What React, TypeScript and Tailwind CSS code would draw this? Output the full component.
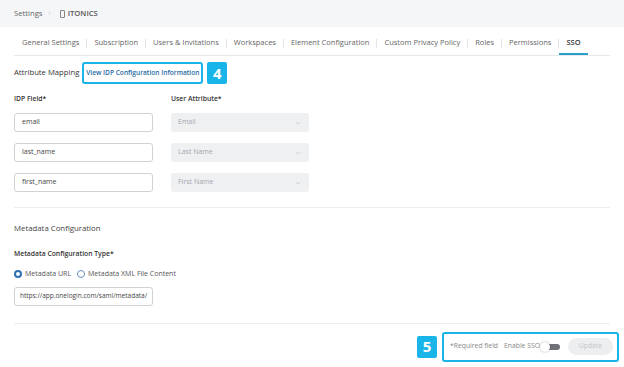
import { ChevronDown } from 'lucide-react'

const tabs = [
  'General Settings',
  'Subscription',
  'Users & Invitations',
  'Workspaces',
  'Element Configuration',
  'Custom Privacy Policy',
  'Roles',
  'Permissions',
  'SSO',
]

const rows = [
  { field: 'email', attr: 'Email' },
  { field: 'last_name', attr: 'Last Name' },
  { field: 'first_name', attr: 'First Name' },
]

function Badge({ n }: { n: string }) {
  return (
    <div className="shrink-0 w-[20px] h-[22px] bg-[#19b4e8] rounded-[2px] flex items-center justify-center text-white text-[15px] font-bold leading-none">
      {n}
    </div>
  )
}

export default function App() {
  return (
    <div
      className="w-[624px] h-[367px] bg-white overflow-hidden text-[#444] whitespace-nowrap"
      style={{ fontFamily: '"Open Sans", sans-serif' }}
    >
      {/* Breadcrumb */}
      <div className="h-[27px] bg-[#f5f6f8] flex items-center px-[14px] text-[7.7px] text-[#666]">
        <span>Settings</span>
        <span className="ml-[6px] mr-[9px] text-[#bbb] text-[7px]">›</span>
        <span className="w-[5px] h-[8px] border border-[#888] rounded-[1px] mr-[3px]" />
        <span className="font-semibold text-[#555]">ITONICS</span>
      </div>

      {/* Tabs */}
      <div className="mx-[14px] h-[29px] border-b border-[#e6e8eb] flex items-stretch pl-[1px]">
        {tabs.map((t, i) => (
          <div key={t} className="flex items-center shrink-0 pt-[4px]">
            {i > 0 && <div className="w-px h-[9px] bg-[#e2e4e7]" />}
            <div
              className={`h-full flex items-center px-[7px] text-[7.5px] ${
                t === 'SSO'
                  ? 'text-[#333] font-semibold border-b-2 border-[#2a9fc9] pt-[2px]'
                  : 'text-[#666]'
              }`}
            >
              {t}
            </div>
          </div>
        ))}
      </div>

      <div className="px-[14px]">
        {/* Attribute mapping */}
        <div className="flex items-center mt-[6px] h-[22px]">
          <span className="text-[7.7px] text-[#333]">Attribute Mapping</span>
          <div className="ml-[3px] shrink-0 h-[22px] w-[121px] border-2 border-[#19b4e8] rounded-[3px] flex items-center justify-center">
            <span className="text-[6.6px] font-semibold text-[#1f6aa8]">View IDP Configuration Information</span>
          </div>
          <div className="ml-[4px]">
            <Badge n="4" />
          </div>
        </div>

        <div className="flex mt-[10px] text-[6.8px] font-semibold text-[#333]">
          <span className="w-[157px]">IDP Field*</span>
          <span>User Attribute*</span>
        </div>

        <div className="flex flex-col gap-[11px] mt-[9px]">
          {rows.map((r) => (
            <div key={r.field} className="flex">
              <div className="w-[139px] h-[19px] border border-[#cfd2d6] rounded-[3px] flex items-center px-[7px] text-[7px] text-[#444]">
                {r.field}
              </div>
              <div className="ml-[18px] w-[138px] h-[19px] bg-[#eff0f2] rounded-[3px] flex items-center justify-between px-[7px] text-[7px] text-[#a3a7ad]">
                <span>{r.attr}</span>
                <ChevronDown size={8} strokeWidth={1.5} className="text-[#b5b9be]" />
              </div>
            </div>
          ))}
        </div>

        <div className="mt-[15px] w-[596px] border-t border-[#eceef0]" />

        {/* Metadata */}
        <div className="mt-[15px] text-[7.8px] text-[#444]">Metadata Configuration</div>
        <div className="mt-[14px] text-[6.8px] font-semibold text-[#333]">Metadata Configuration Type*</div>

        <div className="flex items-center mt-[10px] text-[7px] text-[#555]">
          <span className="w-[8px] h-[8px] rounded-full border-[2.5px] border-[#2c6fb5] bg-white" />
          <span className="ml-[3px]">Metadata URL</span>
          <span className="ml-[6px] w-[8px] h-[8px] rounded-full border border-[#6b8fc0] bg-white" />
          <span className="ml-[3px]">Metadata XML File Content</span>
        </div>

        <div className="mt-[7px] w-[139px] h-[19px] border border-[#cfd2d6] rounded-[3px] flex items-center px-[5px] text-[6.5px] text-[#444] overflow-hidden">
          https://app.onelogin.com/saml/metadata/
        </div>

        <div className="mt-[17px] w-[596px] border-t border-[#eceef0]" />

        {/* Footer */}
        <div className="flex justify-end items-center mt-[8px] w-[605px]">
          <Badge n="5" />
          <div className="ml-[5px] shrink-0 w-[177px] h-[30px] border-2 border-[#19b4e8] rounded-[3px] flex items-center pl-[6px] text-[6.8px] text-[#888]">
            <span>*Required field</span>
            <span className="ml-[6px]">Enable SSO</span>
            <div className="relative shrink-0 w-[20px] h-[10px]">
              <div className="absolute left-[4px] top-[2px] w-[16px] h-[6px] rounded-full bg-[#6f7378]" />
              <div className="absolute left-0 top-0 w-[10px] h-[10px] rounded-full bg-white shadow-[0_0_2px_rgba(0,0,0,0.35)]" />
            </div>
            <div className="ml-[8px] shrink-0 w-[45px] h-[17px] rounded-full bg-[#eceef0] flex items-center justify-center text-[#c3c6ca]">
              Update
            </div>
          </div>
        </div>
      </div>
    </div>
  )
}
